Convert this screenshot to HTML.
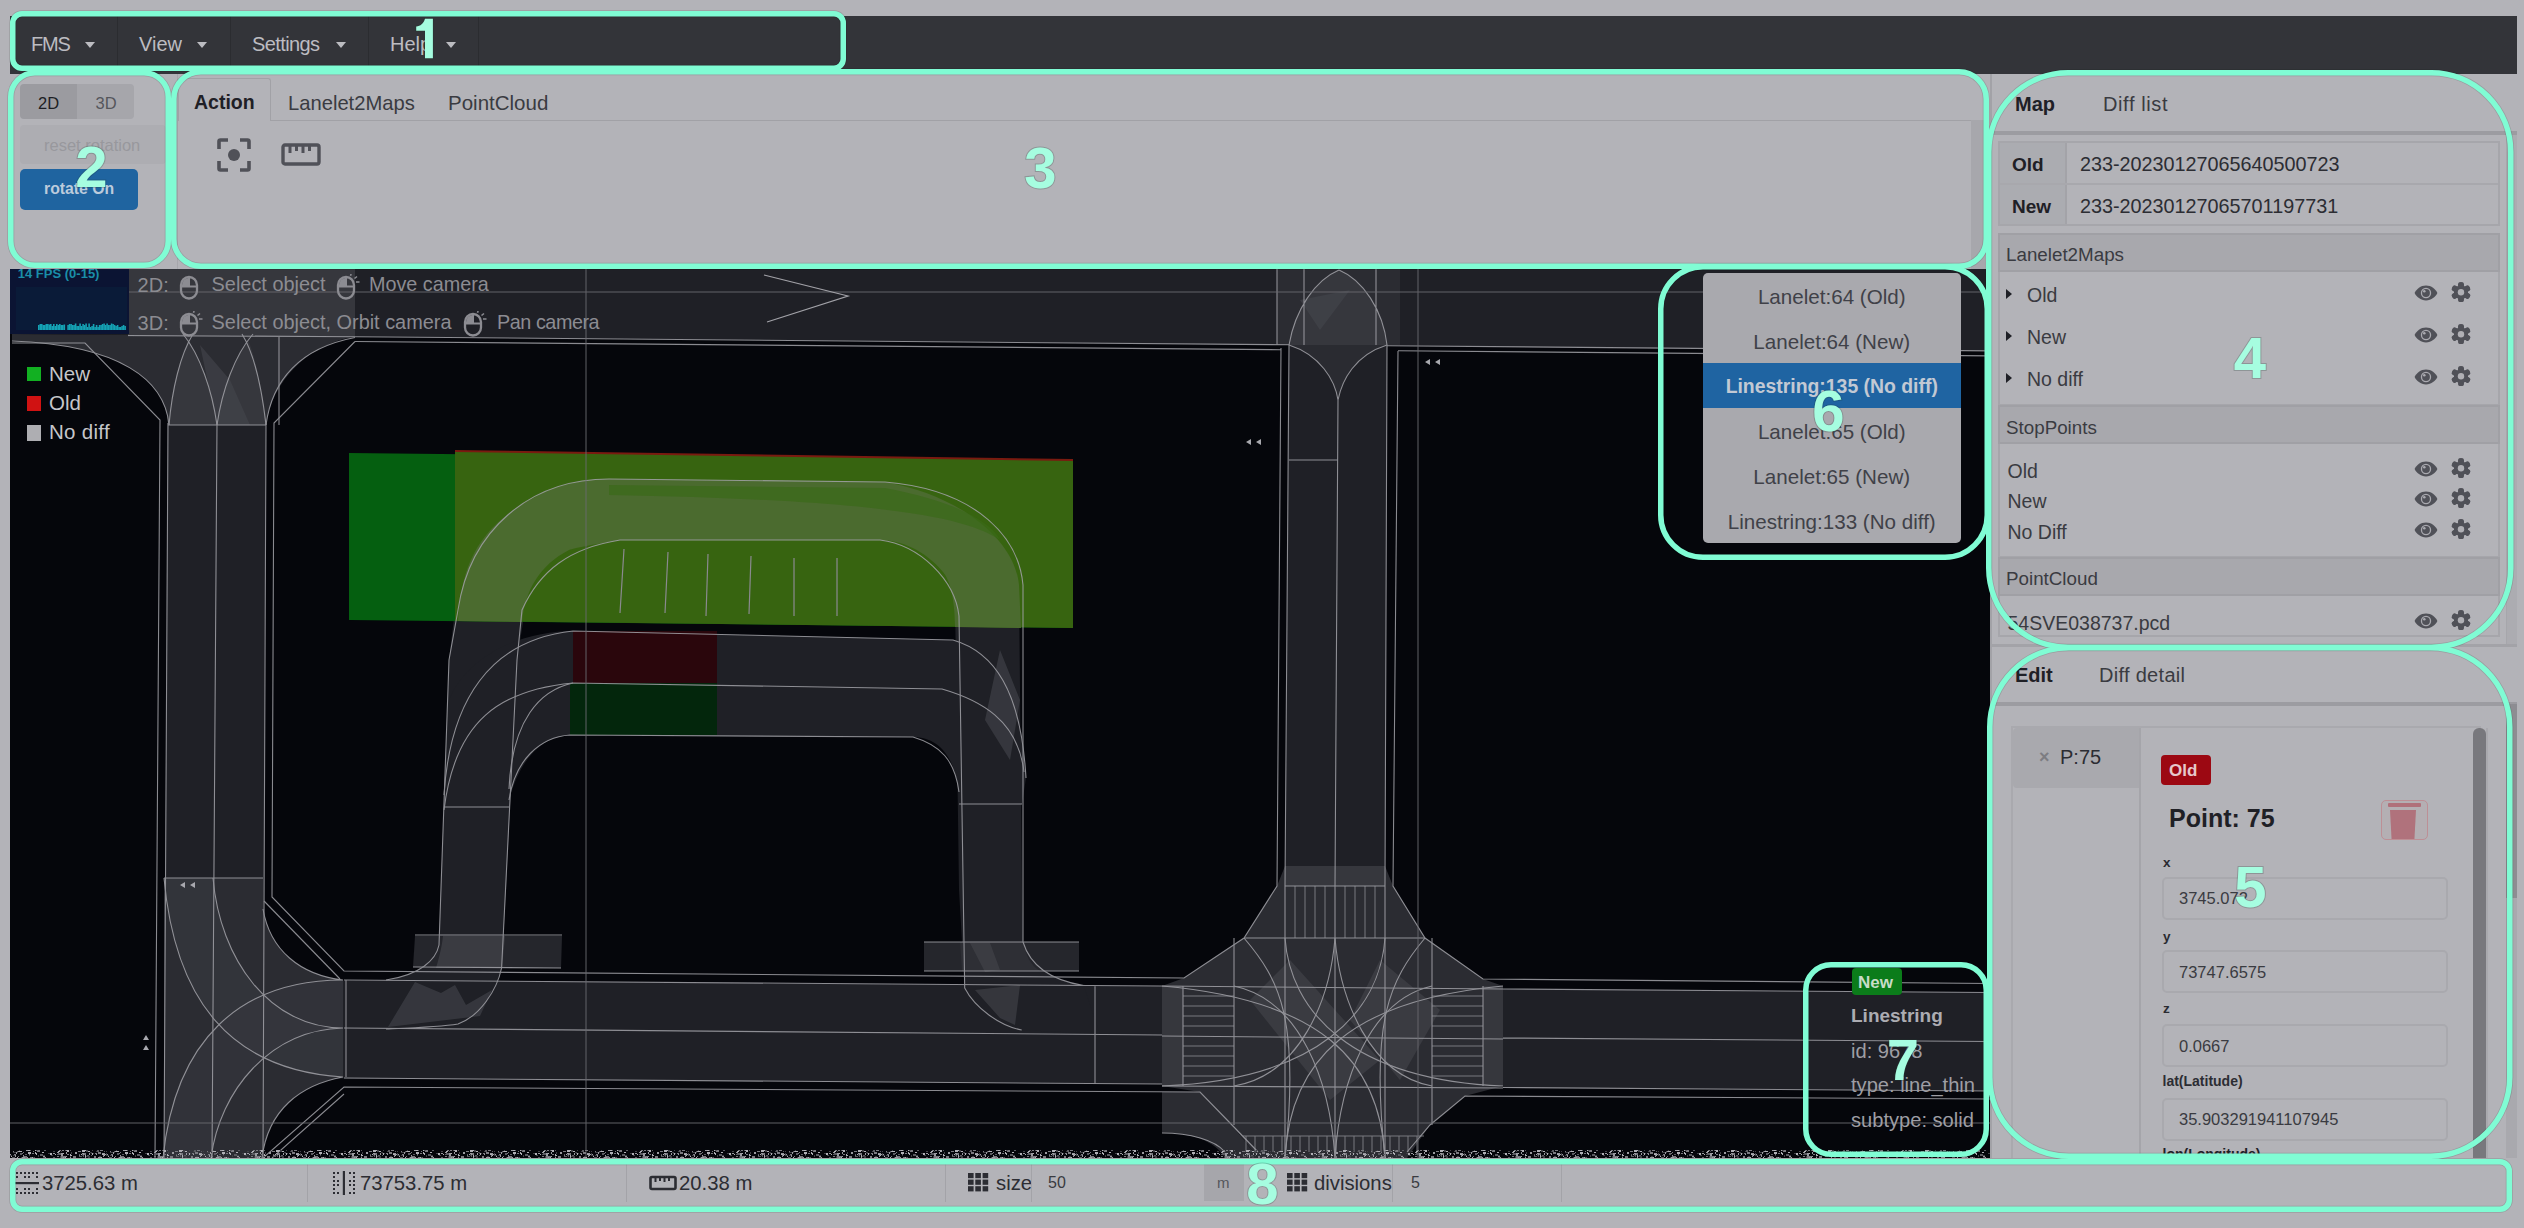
<!DOCTYPE html>
<html><head><meta charset="utf-8">
<style>
*{box-sizing:border-box;margin:0;padding:0}
html,body{width:2524px;height:1228px;overflow:hidden}
body{position:relative;background:#b3b3b8;font-family:"Liberation Sans",sans-serif;color:#2c2d33}
.a{position:absolute;white-space:nowrap}
.t{position:absolute;white-space:nowrap;line-height:1}
/* menubar */
#menubar{left:10px;top:16px;width:2507px;height:58px;background:#333439}
.msep{position:absolute;top:0;width:1px;height:58px;background:#2b2c30}
.mi{position:absolute;top:18px;font-size:20px;color:#bcbcc1}
.caret{position:absolute;top:26px;width:0;height:0;border-left:5px solid transparent;border-right:5px solid transparent;border-top:6px solid #bcbcc1}
/* panels */
#leftp{left:10px;top:74px;width:167px;height:195px;background:#b3b3b8}
#toolp{left:177px;top:74px;width:1813px;height:195px;background:#b3b3b8;border-left:1px solid #a6a6ab}
#rightp{left:1990px;top:74px;width:527px;height:1084px;background:#b3b3b8;border-left:2px solid #a2a2a7}
#status{left:10px;top:1158px;width:2507px;height:54px;background:#b3b3b8}
#map{left:10px;top:269px;width:1980px;height:889px;background:#05060b;overflow:hidden}
.inp{left:169.5px;width:286px;height:43px;border:2px solid #a9a9ae;border-radius:5px;background:#b3b3b8}
</style></head>
<body>
<!-- MENUBAR -->
<div id="menubar" class="a">
  <div class="msep" style="left:107px"></div>
  <div class="msep" style="left:220px"></div>
  <div class="msep" style="left:358px"></div>
  <div class="msep" style="left:468px"></div>
  <div class="mi t" style="left:21px;letter-spacing:-1.2px">FMS</div><div class="caret" style="left:75px"></div>
  <div class="mi t" style="left:129px">View</div><div class="caret" style="left:187px"></div>
  <div class="mi t" style="left:242px;letter-spacing:-0.6px">Settings</div><div class="caret" style="left:326px"></div>
  <div class="mi t" style="left:380px">Help</div><div class="caret" style="left:436px"></div>
</div>

<!-- LEFT PANEL -->
<div id="leftp" class="a">
  <div class="a" style="left:9.5px;top:10px;width:57.5px;height:34.6px;background:#9b9ba0;border-radius:4px 0 0 4px"></div>
  <div class="a" style="left:67px;top:10px;width:57px;height:34.6px;background:#a6a6ab;border-radius:0 4px 4px 0"></div>
  <div class="t" style="left:28px;top:21px;font-size:16.5px;color:#1e1f25">2D</div>
  <div class="t" style="left:85.5px;top:21px;font-size:16.5px;color:#55565c">3D</div>
  <div class="a" style="left:9.5px;top:51px;width:146.5px;height:39px;background:#adadb2;border-radius:4px"></div>
  <div class="t" style="left:34px;top:63px;font-size:16.5px;color:#98989d">reset rotation</div>
  <div class="a" style="left:9.5px;top:95px;width:118.5px;height:41px;background:#1f64a0;border-radius:5px"></div>
  <div class="t" style="left:34px;top:107px;font-size:15.8px;font-weight:700;color:#bccbdc">rotate On</div>
</div>
<!-- TOOL PANEL -->
<div id="toolp" class="a">
  <div class="a" style="left:0;top:46px;width:1793px;height:1px;background:#a1a1a6"></div>
  <div class="a" style="left:0px;top:4px;width:93px;height:43px;background:#b3b3b8;border:1px solid #a1a1a6;border-bottom:none;border-radius:3px 3px 0 0"></div>
  <div class="t" style="left:16px;top:19px;font-size:19.5px;font-weight:700;color:#1f2026">Action</div>
  <div class="t" style="left:110px;top:19px;font-size:20.2px;color:#3a3b41">Lanelet2Maps</div>
  <div class="t" style="left:270px;top:19px;font-size:20.5px;color:#3a3b41">PointCloud</div>
  <svg class="a" style="left:39px;top:64px" width="34" height="34" viewBox="0 0 34 34">
    <path d="M2 11V3.5A1.5 1.5 0 0 1 3.5 2H11M23 2h7.5A1.5 1.5 0 0 1 32 3.5V11M32 23v7.5a1.5 1.5 0 0 1-1.5 1.5H23M11 32H3.5A1.5 1.5 0 0 1 2 30.5V23" fill="none" stroke="#505158" stroke-width="3.6"/>
    <circle cx="17" cy="17" r="6" fill="#505158"/>
  </svg>
  <svg class="a" style="left:103px;top:69px" width="40" height="23" viewBox="0 0 40 23">
    <rect x="2" y="2" width="36" height="19" rx="2" fill="none" stroke="#505158" stroke-width="3.4"/>
    <path d="M9 2v8M15.5 2v6M22 2v8M28.5 2v6" stroke="#505158" stroke-width="3"/>
  </svg>
  <div class="a" style="left:1793px;top:46px;width:14px;height:149px;background:#a7a7ac"></div>
</div>
<!-- MAP -->
<div id="map" class="a">
<svg class="a" style="left:0;top:0" width="1980" height="889" viewBox="10 269 1980 889">
<defs>
  <pattern id="noise" width="97" height="9" patternUnits="userSpaceOnUse"><rect x="41" y="2" width="2" height="2" fill="#5a5a60"/><rect x="9" y="8" width="1" height="1" fill="#404046"/><rect x="7" y="8" width="1" height="1" fill="#5a5a60"/><rect x="55" y="6" width="1" height="1" fill="#5a5a60"/><rect x="70" y="6" width="1" height="2" fill="#5a5a60"/><rect x="28" y="0" width="3" height="2" fill="#b0b0b6"/><rect x="6" y="3" width="1" height="2" fill="#7a7a80"/><rect x="37" y="6" width="1" height="2" fill="#5a5a60"/><rect x="73" y="4" width="3" height="2" fill="#7a7a80"/><rect x="13" y="3" width="2" height="1" fill="#404046"/><rect x="91" y="1" width="3" height="1" fill="#404046"/><rect x="26" y="7" width="3" height="1" fill="#9a9aa0"/><rect x="59" y="7" width="2" height="1" fill="#7a7a80"/><rect x="23" y="3" width="1" height="2" fill="#9a9aa0"/><rect x="67" y="7" width="2" height="2" fill="#b0b0b6"/><rect x="36" y="1" width="1" height="2" fill="#b0b0b6"/><rect x="21" y="5" width="1" height="1" fill="#b0b0b6"/><rect x="5" y="1" width="3" height="2" fill="#9a9aa0"/><rect x="43" y="5" width="3" height="1" fill="#404046"/><rect x="58" y="1" width="1" height="1" fill="#b0b0b6"/><rect x="89" y="1" width="1" height="2" fill="#9a9aa0"/><rect x="82" y="7" width="2" height="2" fill="#b0b0b6"/><rect x="85" y="5" width="1" height="1" fill="#9a9aa0"/><rect x="21" y="1" width="2" height="1" fill="#7a7a80"/><rect x="36" y="2" width="1" height="1" fill="#b0b0b6"/><rect x="63" y="1" width="1" height="1" fill="#b0b0b6"/><rect x="70" y="4" width="1" height="1" fill="#404046"/><rect x="35" y="6" width="2" height="2" fill="#b0b0b6"/><rect x="29" y="2" width="1" height="1" fill="#7a7a80"/><rect x="29" y="3" width="1" height="1" fill="#404046"/><rect x="23" y="4" width="2" height="1" fill="#7a7a80"/><rect x="53" y="8" width="2" height="2" fill="#404046"/><rect x="40" y="2" width="3" height="2" fill="#5a5a60"/><rect x="58" y="8" width="2" height="1" fill="#b0b0b6"/><rect x="50" y="1" width="2" height="2" fill="#b0b0b6"/><rect x="7" y="3" width="1" height="1" fill="#b0b0b6"/><rect x="20" y="1" width="2" height="2" fill="#5a5a60"/><rect x="13" y="0" width="3" height="1" fill="#404046"/><rect x="12" y="5" width="3" height="1" fill="#5a5a60"/><rect x="26" y="6" width="1" height="2" fill="#9a9aa0"/><rect x="44" y="5" width="2" height="1" fill="#5a5a60"/><rect x="62" y="7" width="2" height="1" fill="#9a9aa0"/><rect x="10" y="2" width="1" height="2" fill="#9a9aa0"/><rect x="94" y="4" width="2" height="2" fill="#7a7a80"/><rect x="66" y="0" width="1" height="2" fill="#9a9aa0"/><rect x="18" y="8" width="1" height="2" fill="#9a9aa0"/><rect x="82" y="1" width="2" height="2" fill="#9a9aa0"/><rect x="21" y="5" width="1" height="2" fill="#404046"/><rect x="64" y="5" width="1" height="2" fill="#7a7a80"/><rect x="30" y="6" width="1" height="1" fill="#404046"/><rect x="63" y="5" width="1" height="1" fill="#9a9aa0"/><rect x="60" y="4" width="1" height="2" fill="#404046"/><rect x="44" y="7" width="2" height="1" fill="#5a5a60"/><rect x="28" y="1" width="1" height="1" fill="#7a7a80"/><rect x="43" y="3" width="2" height="2" fill="#404046"/><rect x="0" y="7" width="2" height="2" fill="#5a5a60"/><rect x="84" y="1" width="2" height="2" fill="#7a7a80"/><rect x="61" y="2" width="2" height="2" fill="#9a9aa0"/><rect x="11" y="6" width="2" height="1" fill="#5a5a60"/><rect x="92" y="2" width="1" height="1" fill="#5a5a60"/><rect x="19" y="7" width="1" height="2" fill="#404046"/><rect x="60" y="5" width="1" height="2" fill="#404046"/><rect x="16" y="0" width="1" height="2" fill="#5a5a60"/><rect x="67" y="2" width="2" height="1" fill="#7a7a80"/><rect x="3" y="4" width="1" height="1" fill="#404046"/><rect x="30" y="5" width="2" height="2" fill="#b0b0b6"/><rect x="16" y="0" width="2" height="1" fill="#404046"/><rect x="66" y="6" width="3" height="1" fill="#404046"/><rect x="19" y="8" width="3" height="1" fill="#b0b0b6"/><rect x="23" y="0" width="1" height="1" fill="#7a7a80"/><rect x="60" y="1" width="3" height="1" fill="#9a9aa0"/><rect x="87" y="8" width="3" height="2" fill="#b0b0b6"/><rect x="13" y="8" width="1" height="1" fill="#7a7a80"/><rect x="35" y="0" width="1" height="2" fill="#b0b0b6"/><rect x="71" y="0" width="1" height="1" fill="#9a9aa0"/><rect x="78" y="8" width="3" height="2" fill="#7a7a80"/><rect x="88" y="4" width="2" height="2" fill="#404046"/><rect x="61" y="8" width="1" height="2" fill="#404046"/><rect x="33" y="8" width="1" height="1" fill="#7a7a80"/><rect x="53" y="1" width="2" height="1" fill="#9a9aa0"/><rect x="9" y="3" width="2" height="1" fill="#7a7a80"/><rect x="85" y="4" width="1" height="1" fill="#9a9aa0"/><rect x="18" y="4" width="1" height="1" fill="#7a7a80"/><rect x="95" y="1" width="2" height="1" fill="#7a7a80"/><rect x="85" y="3" width="1" height="2" fill="#b0b0b6"/><rect x="65" y="6" width="2" height="1" fill="#7a7a80"/><rect x="45" y="5" width="1" height="2" fill="#9a9aa0"/><rect x="2" y="5" width="3" height="1" fill="#b0b0b6"/><rect x="90" y="0" width="2" height="1" fill="#404046"/><rect x="79" y="4" width="3" height="1" fill="#5a5a60"/><rect x="29" y="1" width="1" height="1" fill="#9a9aa0"/><rect x="5" y="2" width="2" height="1" fill="#b0b0b6"/><rect x="86" y="4" width="2" height="1" fill="#404046"/><rect x="65" y="7" width="2" height="1" fill="#9a9aa0"/><rect x="7" y="2" width="2" height="1" fill="#9a9aa0"/><rect x="2" y="1" width="2" height="1" fill="#404046"/><rect x="28" y="1" width="2" height="1" fill="#b0b0b6"/><rect x="1" y="5" width="3" height="1" fill="#9a9aa0"/><rect x="79" y="2" width="1" height="2" fill="#7a7a80"/><rect x="14" y="2" width="2" height="1" fill="#7a7a80"/><rect x="25" y="4" width="2" height="2" fill="#7a7a80"/><rect x="37" y="7" width="3" height="2" fill="#7a7a80"/><rect x="34" y="5" width="1" height="1" fill="#5a5a60"/><rect x="1" y="0" width="3" height="2" fill="#7a7a80"/><rect x="65" y="7" width="1" height="1" fill="#5a5a60"/><rect x="84" y="6" width="2" height="2" fill="#b0b0b6"/><rect x="64" y="4" width="1" height="1" fill="#9a9aa0"/><rect x="25" y="2" width="2" height="1" fill="#5a5a60"/><rect x="16" y="0" width="1" height="2" fill="#9a9aa0"/><rect x="55" y="2" width="1" height="1" fill="#b0b0b6"/><rect x="64" y="4" width="3" height="1" fill="#9a9aa0"/><rect x="5" y="7" width="1" height="1" fill="#9a9aa0"/><rect x="57" y="0" width="2" height="1" fill="#9a9aa0"/><rect x="70" y="5" width="1" height="1" fill="#9a9aa0"/><rect x="27" y="5" width="1" height="1" fill="#9a9aa0"/><rect x="48" y="1" width="2" height="1" fill="#404046"/><rect x="83" y="3" width="1" height="2" fill="#5a5a60"/><rect x="11" y="4" width="1" height="1" fill="#b0b0b6"/><rect x="75" y="0" width="2" height="1" fill="#9a9aa0"/><rect x="38" y="3" width="1" height="2" fill="#404046"/><rect x="96" y="2" width="3" height="1" fill="#9a9aa0"/><rect x="92" y="7" width="1" height="1" fill="#404046"/><rect x="82" y="2" width="1" height="2" fill="#404046"/><rect x="80" y="6" width="3" height="1" fill="#404046"/><rect x="96" y="8" width="3" height="1" fill="#404046"/><rect x="91" y="3" width="1" height="1" fill="#5a5a60"/><rect x="17" y="5" width="1" height="1" fill="#b0b0b6"/><rect x="71" y="0" width="1" height="2" fill="#404046"/><rect x="87" y="3" width="2" height="1" fill="#5a5a60"/><rect x="58" y="1" width="3" height="2" fill="#5a5a60"/><rect x="84" y="8" width="1" height="2" fill="#b0b0b6"/><rect x="32" y="1" width="2" height="1" fill="#7a7a80"/><rect x="29" y="7" width="2" height="1" fill="#5a5a60"/><rect x="61" y="4" width="1" height="2" fill="#7a7a80"/><rect x="9" y="2" width="2" height="1" fill="#9a9aa0"/><rect x="79" y="2" width="1" height="1" fill="#5a5a60"/><rect x="62" y="4" width="1" height="2" fill="#7a7a80"/><rect x="86" y="7" width="2" height="2" fill="#404046"/><rect x="36" y="7" width="2" height="1" fill="#5a5a60"/><rect x="70" y="3" width="2" height="1" fill="#b0b0b6"/><rect x="2" y="4" width="2" height="1" fill="#404046"/><rect x="57" y="4" width="2" height="1" fill="#7a7a80"/><rect x="9" y="1" width="1" height="2" fill="#404046"/><rect x="33" y="5" width="1" height="2" fill="#404046"/><rect x="35" y="1" width="2" height="1" fill="#b0b0b6"/><rect x="62" y="6" width="1" height="1" fill="#5a5a60"/><rect x="62" y="7" width="2" height="1" fill="#7a7a80"/><rect x="53" y="5" width="2" height="1" fill="#5a5a60"/><rect x="42" y="0" width="2" height="1" fill="#b0b0b6"/><rect x="15" y="3" width="1" height="2" fill="#9a9aa0"/><rect x="32" y="5" width="1" height="1" fill="#b0b0b6"/><rect x="75" y="1" width="2" height="1" fill="#9a9aa0"/><rect x="6" y="4" width="1" height="1" fill="#9a9aa0"/><rect x="81" y="2" width="1" height="1" fill="#b0b0b6"/><rect x="65" y="5" width="1" height="1" fill="#b0b0b6"/><rect x="3" y="6" width="3" height="2" fill="#7a7a80"/><rect x="92" y="1" width="1" height="2" fill="#b0b0b6"/><rect x="57" y="2" width="2" height="1" fill="#5a5a60"/><rect x="70" y="2" width="1" height="1" fill="#b0b0b6"/><rect x="43" y="4" width="2" height="1" fill="#9a9aa0"/><rect x="51" y="3" width="2" height="1" fill="#404046"/><rect x="85" y="6" width="1" height="1" fill="#7a7a80"/><rect x="9" y="3" width="3" height="1" fill="#404046"/><rect x="28" y="7" width="2" height="1" fill="#b0b0b6"/><rect x="17" y="8" width="1" height="1" fill="#5a5a60"/><rect x="22" y="5" width="3" height="1" fill="#9a9aa0"/><rect x="30" y="5" width="2" height="2" fill="#7a7a80"/><rect x="2" y="6" width="2" height="1" fill="#404046"/><rect x="26" y="6" width="2" height="1" fill="#5a5a60"/><rect x="63" y="4" width="3" height="1" fill="#7a7a80"/></pattern>
</defs>
<g fill="#1f2026">
  <polygon points="10,269 1990,269 1990,350.9 1387,345.7 1289,344.8 355,336.7 10,334"/>
  <polygon points="168,337 266,337 263,1158 164,1158"/>
  <polygon points="272,980 1162,986 1162,1084 272,1078"/>
  <polygon points="1289,345 1387,345 1385,886 1285,886"/>
  <polygon points="1503,989 1990,992.5 1990,1091 1503,1087.5"/>
  <!-- left lane of U -->
  <path d="M449,660 L455,610 L525,610 L517,660 L506,890 L501.6,968 C497,990 480,1016 458,1024 C440,1027 410,1028 386,1029 L386,980 C420,975 436,960 439,945 Z"/>
  <!-- right lane of U -->
  <path d="M955,600 L1019,585 L1022,890 L1023,942 C1030,965 1050,980 1083.6,985.5 L1100,1034 L1021.7,1030 C1000,1026 975,1008 964.7,988 L959,890 Z"/>
  <!-- lower band -->
  <path d="M449,700 C470,650 530,631 573,631 L953,640 C994,652 1021,690 1026,778 L1022,804 L959,804 C959,760 940,737 913,737 L570,735 C540,737 520,760 509,800 L444,810 Z"/>
</g>
<!-- lighter intersection fills -->
<g fill="#2b2c32">
  <path d="M12,334 L355,336.7 C310,343 272,380 266,425 L169,425 C165,380 120,345 12,341 Z"/><polygon points="128,269 355,269 355,337 128,337"/>
  <path d="M164,878 L263,878 L263,909 C270,950 300,975 343,980 L343,1077 C300,1085 268,1110 262,1158 L164,1158 Z"/>
  <polygon points="1285,866 1385,866 1393,886 1425,938 1483,979 1503,986 1503,1086 1465,1096 1430,1125 1407,1158 1258,1158 1232,1125 1200,1092 1162,1086 1162,986 1184,978 1244,938 1277,886"/><path d="M1162,1092 L1200,1092 L1232,1125 L1258,1158 L1225,1158 C1215,1140 1190,1133 1162,1133 Z"/>
  <polygon points="1277,269 1400,269 1400,345 1277,345"/>
</g>
<g fill="#36373d">
  <polygon points="128,269 355,269 355,337 128,337"/>
  <path d="M169,425 C172,390 180,355 190,337 L186,337 C200,355 212,390 217,425 Z"/>
  <path d="M217,425 C222,390 235,355 250,337 L247,337 C255,355 262,390 266,425 Z"/>
  <path d="M1289,345 C1295,310 1315,280 1339,270 C1363,280 1383,310 1387,345 Z"/>
  <path d="M164,878 L213,878 C220,960 270,1028 343,1028 L343,1077 C230,1070 175,1000 164,878 Z" opacity="0.7"/>
  <path d="M163,1158 C175,1040 240,980 343,980 L343,1028 C270,1030 220,1090 211,1158 Z" opacity="0.6"/>
  <polygon points="1162,986 1183,986 1183,1086 1162,1086"/>
  <polygon points="1483,986 1503,986 1503,1086 1483,1086"/>
  <polygon points="1285,866 1385,866 1385,886 1285,886"/>
  
  <path d="M1289,345 C1320,355 1335,380 1338,400 C1342,380 1355,355 1387,345 Z" fill="#2a2b31"/>
</g>
<polygon points="415,936 562,936 561,968 413,967" fill="#25262c"/><polygon points="924,942 1079,942 1079,971 924,971" fill="#25262c"/><path d="M443,936 L505,936 L502,968 L436,968 C440,955 442,945 443,936Z" fill="#3a3b41"/><path d="M960,942 L1023,942 C1026,955 1030,965 1040,971 L962,971Z" fill="#2e2f35"/>
<g fill="#45464c" opacity="0.6">
  <polygon points="200,345 230,380 250,425 217,425"/>
  <polygon points="1300,300 1350,290 1320,330"/>
  <polygon points="1290,960 1380,1060 1330,1100 1250,1000"/>
  <polygon points="1380,960 1440,1010 1400,1080 1350,1020"/>
  <polygon points="388,1027 415,982 441,993 455,985 466,1005 492,990 480,1016"/><polygon points="975,990 1020,985 1015,1025 1000,1018"/><polygon points="970,943 990,943 1000,970 985,972"/>
  <polygon points="1000,650 1020,700 1010,760 985,720"/>
</g>
<!-- green / red diff areas -->
<polygon points="349,453 1073,461 1073,628 349,620" fill="#055f10"/>
<polygon points="455,451 1073,460 1073,628 455,621" fill="#376410"/>
<path d="M458,621 C462,560 480,520 554,488 C575,482 590,479 609,479 L885,482 C960,495 1015,540 1019,585 L1021,628 L955,627 C955,600 950,580 943,572 C925,550 900,540 880,540 L620,540 C590,545 575,548 569,550 C540,565 525,590 522,622 Z" fill="#4b6b2f"/>
<path d="M609,485 L885,488 C950,500 990,520 1000,540 C970,520 900,500 609,495 Z" fill="#3a6a18" opacity="0.7"/>
<polygon points="573,631 717,631 717,683 573,683" fill="#2a060c"/>
<polygon points="570,683 717,683 717,735 570,735" fill="#03260c"/>
<line x1="455" y1="451" x2="1073" y2="460" stroke="#7a1a10" stroke-width="2"/>
<g stroke="#8a8a8f" stroke-width="1.2" fill="none">
  <path d="M620,613 L624,549 M665,613 L668,552 M706,616 L708,554 M749,614 L751,556 M794,616 L794,558 M837,616 L837,558"/>
</g>
<!-- lines -->
<g stroke="#a2a2a8" stroke-width="1.1" fill="none" opacity="0.85">
  <path d="M355,336.7 L1289,344.8 M1387,345.7 L1990,350.9"/>
  <path d="M355,341.5 L1281,349.7 M1398,350.8 L1990,355.9"/>
  <path d="M12,343 L85,343 L160,420 L155,1158"/>
  <path d="M355,341.5 L274,423 L272,897 L344,971 L1184,978 L1244,938 L1277,886 L1281,348"/>
  <path d="M264,901 L340,979"/>
  <path d="M1398,351 L1393,886 L1425,938 L1483,979 L1990,983.5"/>
  <path d="M263,1158 L344,1087 L1200,1092 L1232,1125 L1258,1152 M272,1158 L344,1094 M1162,1133 C1190,1133 1215,1140 1225,1152"/>
  <path d="M1990,1099 L1465,1096 L1430,1125 L1407,1152"/>
  <path d="M168,423 L164,1158 M217,423 L212,1158 M266,423 L263,1158"/>
  <path d="M168,425 L266,425 M164,878 L263,878"/>
  <!-- funnel arcs -->
  <path d="M169,425 C172,390 180,355 193,334 M217,425 C212,390 200,355 183,334 M217,425 C222,390 235,355 253,334 M266,425 C262,390 255,355 242,334"/>
  <path d="M266,425 C272,380 300,348 355,337.5 M169,425 C165,380 120,345 12,341"/>
  <path d="M279,337 L279,425 M128,335.5 L355,336.7"/>
  <!-- bottom-left corner arcs -->
  <path d="M164,878 C175,1000 230,1070 343,1077 M213,878 C220,960 270,1028 343,1028 M163,1158 C175,1040 240,980 343,980 M211,1158 C220,1090 270,1030 343,1028 M263,909 C270,950 300,975 343,980 M262,1158 C268,1110 300,1085 343,1077"/>
  <path d="M346,980 L346,1077"/>
  <path d="M344,980 L1162,986 M344,1028 L1162,1035 M344,1078 L1162,1084 M1095,986 L1095,1084"/>
  <!-- right vertical road -->
  <path d="M1289,345 L1285,886 M1338,400 L1335,886 M1387,345 L1385,886"/>
  <path d="M1289,460 L1338,460 M1289,345 C1320,355 1335,380 1338,400 C1342,380 1355,355 1387,345"/>
  <path d="M1289,345 C1295,310 1315,280 1339,270 C1363,280 1383,310 1387,345 M1277,269 V345 M1304,269 V345 M1376,269 V345"/>
  <path d="M1285,886 L1385,886 M1244,938 L1425,938 M1234,938 L1234,1125 M1432,938 L1432,1125 M1183,986 L1183,1086 M1483,986 L1483,1086"/>
  <path d="M1162,986 L1503,989 M1162,1036 L1503,1039 M1162,1086 L1503,1088 M1503,989 L1990,992.5 M1503,1038 L1990,1041.5 M1503,1087.5 L1990,1091"/>
  <path d="M1285,886 L1285,1158 M1335,886 L1335,1158 M1385,886 L1385,1158"/>
  <!-- intersection arcs -->
  <path d="M1234,986 C1300,1000 1330,1080 1335,1158 M1432,986 C1370,1000 1340,1080 1335,1158 M1234,1086 C1300,1075 1330,1000 1335,938 M1432,1086 C1370,1075 1340,1000 1335,938"/>
  <path d="M1285,938 C1290,1010 1350,1080 1503,1086 M1385,938 C1380,1010 1320,1080 1162,1086 M1285,1158 C1290,1060 1350,1000 1503,986 M1385,1158 C1380,1060 1320,1000 1162,986"/>
  <path d="M1244,938 C1280,980 1300,1020 1285,1158 M1425,938 C1390,980 1370,1020 1385,1158"/>
  <!-- U lines -->
  <path d="M439,945 L449,660 L458,610 C470,530 530,479 609,479 L885,482 C980,490 1019,540 1023,585 L1023,942 C1030,965 1050,980 1083.6,985.5"/>
  <path d="M501.6,968 L517,660 L522,610 C540,570 570,548 620,540 L880,540 C920,545 955,580 959,616 L964.7,988 C975,1008 1000,1026 1021.7,1030"/>
  <path d="M439,945 C436,960 420,975 386,980 M501.6,968 C497,990 480,1016 458,1024 C440,1027 410,1028 386,1029"/>
  <path d="M444,795 C450,700 490,640 573,631 L953,640 C994,652 1021,690 1026,778"/>
  <path d="M444,810 C455,720 500,690 573,683 L942,689 C980,700 1018,720 1024,772"/>
  <path d="M509,789 C512,720 540,690 573,683 M509,800 C515,760 540,737 570,735 L913,737 C940,745 955,760 959,792"/>
  <path d="M444,807 L509,807 M959,804 L1022,804"/>
  <path d="M415,935 L562,935 M413,967 L561,968 M924,942 L1079,942 M924,971 L1079,971"/>
</g>
<g stroke="#9a9aa0" stroke-width="1" opacity="0.7">
  <path d="M1295,886V938M1305,886V938M1315,886V938M1325,886V938M1345,886V938M1355,886V938M1365,886V938M1375,886V938"/>
  <path d="M1183,996H1234M1183,1006H1234M1183,1016H1234M1183,1026H1234M1183,1046H1234M1183,1056H1234M1183,1066H1234M1183,1076H1234"/>
  <path d="M1432,996H1483M1432,1006H1483M1432,1016H1483M1432,1026H1483M1432,1046H1483M1432,1056H1483M1432,1066H1483M1432,1076H1483"/>
  <path d="M1246,1136V1152M1255,1136V1152M1264,1136V1152M1273,1136V1152M1282,1136V1152M1291,1136V1152M1300,1136V1152M1309,1136V1152M1318,1136V1152M1327,1136V1152M1336,1136V1152M1345,1136V1152M1354,1136V1152M1363,1136V1152M1372,1136V1152M1381,1136V1152M1390,1136V1152M1399,1136V1152M1408,1136V1152M1417,1136V1152M1243,1136H1424"/>
</g>
<g stroke="#6a6b70" stroke-width="1" opacity="0.9">
  <path d="M586,269V1158M1418,269V1158M10,1123H1990M10,292H1990"/>
</g>
<g fill="#a8a8ae">
  <path d="M180,885 l5,-3 v6 z M190,885 l5,-3 v6 z M1246,442 l5,-3 v6z M1256,442 l5,-3 v6z M1425,362 l5,-3 v6z M1435,362 l5,-3 v6z M146,1035 l-3,5 h6z M146,1045 l-3,5 h6z"/>
</g>
<path d="M764,275 L848,296 L767,322" stroke="#a2a2a8" stroke-width="1.2" fill="none"/>
<rect x="10" y="1150" width="1980" height="8" fill="url(#noise)"/>
</svg>



<div class="a" style="left:0;top:0;width:1980px;height:889px"><div class="t" style="left:127.6px;top:6px;font-size:20px;color:#8c8c92">2D:</div><svg class="a" style="left:169px;top:5px" width="26" height="26" viewBox="0 0 26 26"><rect x="2" y="3" width="16" height="21.5" rx="8" fill="none" stroke="#8c8c92" stroke-width="2.3"/><path d="M2.5 12.5H17.5M10 3V12.5" stroke="#8c8c92" stroke-width="2" fill="none"/><path d="M10 4 A7 7 0 0 0 3 11 V12.5 H10 Z" fill="#8c8c92"/></svg><div class="t" style="left:201.6px;top:6px;font-size:19.9px;color:#8c8c92">Select object</div><svg class="a" style="left:325.7px;top:5px" width="26" height="26" viewBox="0 0 26 26"><rect x="2" y="3" width="16" height="21.5" rx="8" fill="none" stroke="#8c8c92" stroke-width="2.3"/><path d="M2.5 12.5H17.5M10 3V12.5" stroke="#8c8c92" stroke-width="2" fill="none"/><path d="M10 4 A7 7 0 0 0 3 11 V12.5 H10 Z" fill="#8c8c92"/><path d="M18.5 4.5l2.5-2M20 8h3.5M14.5 1.8l.6-1.8" stroke="#8c8c92" stroke-width="1.6"/></svg><div class="t" style="left:359px;top:6px;font-size:19.8px;color:#8c8c92">Move camera</div><div class="t" style="left:127.6px;top:43.6px;font-size:20px;color:#8c8c92">3D:</div><svg class="a" style="left:169px;top:42px" width="26" height="26" viewBox="0 0 26 26"><rect x="2" y="3" width="16" height="21.5" rx="8" fill="none" stroke="#8c8c92" stroke-width="2.3"/><path d="M2.5 12.5H17.5M10 3V12.5" stroke="#8c8c92" stroke-width="2" fill="none"/><path d="M10 4 A7 7 0 0 0 3 11 V12.5 H10 Z" fill="#8c8c92"/><path d="M18.5 4.5l2.5-2M20 8h3.5M14.5 1.8l.6-1.8" stroke="#8c8c92" stroke-width="1.6"/></svg><div class="t" style="left:201.6px;top:43.6px;font-size:19.9px;color:#8c8c92">Select object, Orbit camera</div><svg class="a" style="left:453px;top:42px" width="26" height="26" viewBox="0 0 26 26"><rect x="2" y="3" width="16" height="21.5" rx="8" fill="none" stroke="#8c8c92" stroke-width="2.3"/><path d="M2.5 12.5H17.5M10 3V12.5" stroke="#8c8c92" stroke-width="2" fill="none"/><path d="M10 4 A7 7 0 0 0 3 11 V12.5 H10 Z" fill="#8c8c92"/><path d="M18.5 4.5l2.5-2M20 8h3.5M14.5 1.8l.6-1.8" stroke="#8c8c92" stroke-width="1.6"/></svg><div class="t" style="left:487px;top:43.6px;font-size:19.8px;color:#8c8c92;letter-spacing:-0.45px">Pan camera</div><div class="a" style="left:17px;top:98px;width:14px;height:14px;background:#12b022"></div><div class="a" style="left:17px;top:127px;width:14px;height:15px;background:#d01212"></div><div class="a" style="left:17px;top:156px;width:14px;height:16px;background:#aeaeb2"></div><div class="t" style="left:39px;top:95px;font-size:20.5px;color:#c6c6ca">New</div><div class="t" style="left:39px;top:124px;font-size:20.5px;color:#c6c6ca">Old</div><div class="t" style="left:39px;top:153px;font-size:20.5px;color:#c6c6ca;letter-spacing:0.3px">No diff</div><div class="a" style="left:1842px;top:699px;width:50px;height:27px;background:#0b7c1a;border-radius:4px"></div><div class="t" style="left:1848px;top:705px;font-size:17px;font-weight:700;color:#c8dcc8">New</div><div class="t" style="left:1841px;top:737px;font-size:19px;font-weight:700;color:#acacb2">Linestring</div><div class="t" style="left:1841px;top:772px;font-size:20.1px;color:#9e9ea4">id: 9678</div><div class="t" style="left:1841px;top:806px;font-size:20.1px;color:#9e9ea4">type: line_thin</div><div class="t" style="left:1841px;top:841px;font-size:20.1px;color:#9e9ea4">subtype: solid</div></div><div class="a" style="left:1692.5px;top:4px;width:258.5px;height:270px;background:#a9a9ae;border-radius:5px;overflow:hidden"><div class="t" style="left:0;top:14px;width:258.5px;text-align:center;font-size:20.6px;color:#404148">Lanelet:64 (Old)</div><div class="t" style="left:0;top:59px;width:258.5px;text-align:center;font-size:20.6px;color:#404148">Lanelet:64 (New)</div><div class="a" style="left:0;top:89.5px;width:258.5px;height:45px;background:#1f64a2"></div><div class="t" style="left:0;top:104px;width:258.5px;text-align:center;font-size:19.4px;font-weight:700;color:#c2c9d4">Linestring:135 (No diff)</div><div class="t" style="left:0;top:149px;width:258.5px;text-align:center;font-size:20.6px;color:#404148">Lanelet:65 (Old)</div><div class="t" style="left:0;top:194px;width:258.5px;text-align:center;font-size:20.6px;color:#404148">Lanelet:65 (New)</div><div class="t" style="left:0;top:239px;width:258.5px;text-align:center;font-size:20.6px;color:#404148">Linestring:133 (No diff)</div></div>
<!-- FPS panel -->
<div class="a" style="left:0;top:0;width:118.5px;height:65px;background:#0b1433"></div>
<div class="a" style="left:5.8px;top:17.5px;width:110.8px;height:43.5px;background:#0a1b38"></div>
<svg class="a" style="left:0;top:0" width="120" height="66"><g fill="#14a2b4"><rect x="28.0" y="56.0" width="1.6" height="5" /><rect x="29.5" y="55.0" width="1.6" height="6" /><rect x="31.0" y="55.0" width="1.6" height="6" /><rect x="32.5" y="56.0" width="1.6" height="5" /><rect x="34.0" y="56.0" width="1.6" height="5" /><rect x="35.5" y="55.0" width="1.6" height="6" /><rect x="37.0" y="55.0" width="1.6" height="6" /><rect x="38.5" y="55.5" width="1.6" height="5.5" /><rect x="40.0" y="55.0" width="1.6" height="6" /><rect x="41.5" y="57.0" width="1.6" height="4" /><rect x="43.0" y="55.0" width="1.6" height="6" /><rect x="44.5" y="57.0" width="1.6" height="4" /><rect x="46.0" y="55.0" width="1.6" height="6" /><rect x="47.5" y="56.0" width="1.6" height="5" /><rect x="49.0" y="55.0" width="1.6" height="6" /><rect x="50.5" y="56.0" width="1.6" height="5" /><rect x="52.0" y="56.0" width="1.6" height="5" /><rect x="53.5" y="55.5" width="1.6" height="5.5" /><rect x="57.3" y="56.0" width="1.6" height="5" /><rect x="58.8" y="55.0" width="1.6" height="6" /><rect x="60.3" y="55.0" width="1.6" height="6" /><rect x="61.8" y="56.0" width="1.6" height="5" /><rect x="63.3" y="56.0" width="1.6" height="5" /><rect x="64.8" y="54.5" width="1.6" height="6.5" /><rect x="66.3" y="57.0" width="1.6" height="4" /><rect x="67.8" y="57.0" width="1.6" height="4" /><rect x="69.3" y="54.5" width="1.6" height="6.5" /><rect x="70.8" y="57.0" width="1.6" height="4" /><rect x="72.3" y="55.0" width="1.6" height="6" /><rect x="73.8" y="56.0" width="1.6" height="5" /><rect x="75.3" y="54.5" width="1.6" height="6.5" /><rect x="76.8" y="58.0" width="1.6" height="3" /><rect x="78.3" y="54.5" width="1.6" height="6.5" /><rect x="79.8" y="58.0" width="1.6" height="3" /><rect x="81.3" y="57.0" width="1.6" height="4" /><rect x="82.8" y="55.0" width="1.6" height="6" /><rect x="84.3" y="58.0" width="1.6" height="3" /><rect x="85.8" y="56.0" width="1.6" height="5" /><rect x="87.3" y="58.0" width="1.6" height="3" /><rect x="88.8" y="56.0" width="1.6" height="5" /><rect x="90.3" y="56.0" width="1.6" height="5" /><rect x="91.8" y="55.0" width="1.6" height="6" /><rect x="93.3" y="54.5" width="1.6" height="6.5" /><rect x="94.8" y="56.0" width="1.6" height="5" /><rect x="96.3" y="54.5" width="1.6" height="6.5" /><rect x="97.8" y="56.0" width="1.6" height="5" /><rect x="99.3" y="56.0" width="1.6" height="5" /><rect x="100.8" y="54.5" width="1.6" height="6.5" /><rect x="102.3" y="55.0" width="1.6" height="6" /><rect x="103.8" y="56.0" width="1.6" height="5" /><rect x="105.3" y="57.0" width="1.6" height="4" /><rect x="106.8" y="56.0" width="1.6" height="5" /><rect x="108.3" y="58.0" width="1.6" height="3" /><rect x="109.8" y="58.0" width="1.6" height="3" /><rect x="111.3" y="57.0" width="1.6" height="4" /><rect x="112.8" y="56.0" width="1.6" height="5" /><rect x="114.3" y="57.0" width="1.6" height="4" /></g></svg>
<div class="t" style="left:7.8px;top:-2.4px;font-size:13px;font-weight:700;color:#1a8ea8">14 FPS (0-15)</div>
</div>

<!-- RIGHT PANEL -->
<div id="rightp" class="a">
  <div class="t" style="left:23px;top:20px;font-size:20px;font-weight:700;color:#1f2026">Map</div>
  <div class="t" style="left:111px;top:20px;font-size:20px;color:#3a3b41;letter-spacing:0.6px">Diff list</div>
  <div class="a" style="left:0;top:57px;width:525px;height:4px;background:#9c9ca1"></div>
  <!-- table -->
  <div class="a" style="left:6px;top:67px;width:502px;height:85px;border:2px solid #a6a6ab;background:#b3b3b8"></div>
  <div class="a" style="left:8px;top:69px;width:66px;height:81px;background:#abacb1"></div>
  <div class="a" style="left:73px;top:69px;width:2px;height:81px;background:#a3a3a8"></div>
  <div class="a" style="left:8px;top:109px;width:498px;height:2px;background:#a8a8ad"></div>
  <div class="t" style="left:20px;top:81px;font-size:19px;font-weight:700;color:#1f2026">Old</div>
  <div class="t" style="left:20px;top:123px;font-size:19px;font-weight:700;color:#1f2026">New</div>
  <div class="t" style="left:88px;top:81px;font-size:19.8px;color:#2c2d33">233-20230127065640500723</div>
  <div class="t" style="left:88px;top:123px;font-size:19.8px;color:#2c2d33">233-20230127065701197731</div>
  <!-- Lanelet2Maps -->
  <div class="a" style="left:6px;top:159px;width:502px;height:173px;border:2px solid #a6a6ab"></div>
  <div class="a" style="left:6px;top:159px;width:502px;height:39px;background:#a8a8ad;border:2px solid #a0a0a5"></div>
  <div class="t" style="left:14px;top:172px;font-size:18.8px;color:#3a3b41">Lanelet2Maps</div>
  <!-- StopPoints -->
  <div class="a" style="left:6px;top:331px;width:502px;height:153px;border:2px solid #a6a6ab"></div>
  <div class="a" style="left:6px;top:331px;width:502px;height:39px;background:#a8a8ad;border:2px solid #a0a0a5"></div>
  <div class="t" style="left:14px;top:345px;font-size:18.8px;color:#3a3b41">StopPoints</div>
  <!-- PointCloud -->
  <div class="a" style="left:6px;top:483px;width:502px;height:80px;border:2px solid #a6a6ab"></div>
  <div class="a" style="left:6px;top:483px;width:502px;height:39px;background:#a8a8ad;border:2px solid #a0a0a5"></div>
  <div class="t" style="left:14px;top:496px;font-size:18.8px;color:#3a3b41">PointCloud</div>
  <div class="a" style="left:514px;top:61px;width:11px;height:511px;background:#acacb1;border-left:1px solid #a6a6ab"></div>
  <div class="a" style="left:0;top:570px;width:525px;height:2.5px;background:#a3a3a8"></div>
  <!-- rows -->
<div class="a" style="left:14px;top:214.5px;width:0;height:0;border-top:5.5px solid transparent;border-bottom:5.5px solid transparent;border-left:6.2px solid #1f2026"></div><div class="t" style="left:35px;top:211.5px;font-size:19.5px;color:#3a3b41">Old</div><svg class="a" style="left:422px;top:210.9px" width="24" height="16" viewBox="0 0 24 16"><path d="M12 0.6C6.6 0.6 2.4 4.2 0.6 8c1.8 3.8 6 7.4 11.4 7.4s9.6-3.6 11.4-7.4C21.6 4.2 17.4 0.6 12 0.6z" fill="#505158"/><circle cx="12" cy="8" r="5.2" fill="#aaaab0"/><circle cx="12" cy="8" r="3.9" fill="#505158"/><circle cx="10.3" cy="6.2" r="1.3" fill="#aaaab0"/></svg><svg class="a" style="left:459px;top:208.3px" width="20" height="21" viewBox="0 0 20 21"><g fill="#505158"><rect x="7.2" y="0.3" width="5.6" height="19.8" rx="2" transform="rotate(0 10 10.2)"/><rect x="7.2" y="0.3" width="5.6" height="19.8" rx="2" transform="rotate(60 10 10.2)"/><rect x="7.2" y="0.3" width="5.6" height="19.8" rx="2" transform="rotate(120 10 10.2)"/><rect x="7.2" y="0.3" width="5.6" height="19.8" rx="2" transform="rotate(180 10 10.2)"/><rect x="7.2" y="0.3" width="5.6" height="19.8" rx="2" transform="rotate(240 10 10.2)"/><rect x="7.2" y="0.3" width="5.6" height="19.8" rx="2" transform="rotate(300 10 10.2)"/><circle cx="10" cy="10.2" r="7"/></g><circle cx="10" cy="10.2" r="3.2" fill="#b0b0b5"/></svg><div class="a" style="left:14px;top:256.5px;width:0;height:0;border-top:5.5px solid transparent;border-bottom:5.5px solid transparent;border-left:6.2px solid #1f2026"></div><div class="t" style="left:35px;top:253.5px;font-size:19.5px;color:#3a3b41">New</div><svg class="a" style="left:422px;top:252.9px" width="24" height="16" viewBox="0 0 24 16"><path d="M12 0.6C6.6 0.6 2.4 4.2 0.6 8c1.8 3.8 6 7.4 11.4 7.4s9.6-3.6 11.4-7.4C21.6 4.2 17.4 0.6 12 0.6z" fill="#505158"/><circle cx="12" cy="8" r="5.2" fill="#aaaab0"/><circle cx="12" cy="8" r="3.9" fill="#505158"/><circle cx="10.3" cy="6.2" r="1.3" fill="#aaaab0"/></svg><svg class="a" style="left:459px;top:250.3px" width="20" height="21" viewBox="0 0 20 21"><g fill="#505158"><rect x="7.2" y="0.3" width="5.6" height="19.8" rx="2" transform="rotate(0 10 10.2)"/><rect x="7.2" y="0.3" width="5.6" height="19.8" rx="2" transform="rotate(60 10 10.2)"/><rect x="7.2" y="0.3" width="5.6" height="19.8" rx="2" transform="rotate(120 10 10.2)"/><rect x="7.2" y="0.3" width="5.6" height="19.8" rx="2" transform="rotate(180 10 10.2)"/><rect x="7.2" y="0.3" width="5.6" height="19.8" rx="2" transform="rotate(240 10 10.2)"/><rect x="7.2" y="0.3" width="5.6" height="19.8" rx="2" transform="rotate(300 10 10.2)"/><circle cx="10" cy="10.2" r="7"/></g><circle cx="10" cy="10.2" r="3.2" fill="#b0b0b5"/></svg><div class="a" style="left:14px;top:298.5px;width:0;height:0;border-top:5.5px solid transparent;border-bottom:5.5px solid transparent;border-left:6.2px solid #1f2026"></div><div class="t" style="left:35px;top:295.5px;font-size:19.5px;color:#3a3b41">No diff</div><svg class="a" style="left:422px;top:294.9px" width="24" height="16" viewBox="0 0 24 16"><path d="M12 0.6C6.6 0.6 2.4 4.2 0.6 8c1.8 3.8 6 7.4 11.4 7.4s9.6-3.6 11.4-7.4C21.6 4.2 17.4 0.6 12 0.6z" fill="#505158"/><circle cx="12" cy="8" r="5.2" fill="#aaaab0"/><circle cx="12" cy="8" r="3.9" fill="#505158"/><circle cx="10.3" cy="6.2" r="1.3" fill="#aaaab0"/></svg><svg class="a" style="left:459px;top:292.3px" width="20" height="21" viewBox="0 0 20 21"><g fill="#505158"><rect x="7.2" y="0.3" width="5.6" height="19.8" rx="2" transform="rotate(0 10 10.2)"/><rect x="7.2" y="0.3" width="5.6" height="19.8" rx="2" transform="rotate(60 10 10.2)"/><rect x="7.2" y="0.3" width="5.6" height="19.8" rx="2" transform="rotate(120 10 10.2)"/><rect x="7.2" y="0.3" width="5.6" height="19.8" rx="2" transform="rotate(180 10 10.2)"/><rect x="7.2" y="0.3" width="5.6" height="19.8" rx="2" transform="rotate(240 10 10.2)"/><rect x="7.2" y="0.3" width="5.6" height="19.8" rx="2" transform="rotate(300 10 10.2)"/><circle cx="10" cy="10.2" r="7"/></g><circle cx="10" cy="10.2" r="3.2" fill="#b0b0b5"/></svg><div class="t" style="left:15.5px;top:387.5px;font-size:19.5px;color:#3a3b41">Old</div><svg class="a" style="left:422px;top:386.9px" width="24" height="16" viewBox="0 0 24 16"><path d="M12 0.6C6.6 0.6 2.4 4.2 0.6 8c1.8 3.8 6 7.4 11.4 7.4s9.6-3.6 11.4-7.4C21.6 4.2 17.4 0.6 12 0.6z" fill="#505158"/><circle cx="12" cy="8" r="5.2" fill="#aaaab0"/><circle cx="12" cy="8" r="3.9" fill="#505158"/><circle cx="10.3" cy="6.2" r="1.3" fill="#aaaab0"/></svg><svg class="a" style="left:459px;top:384.3px" width="20" height="21" viewBox="0 0 20 21"><g fill="#505158"><rect x="7.2" y="0.3" width="5.6" height="19.8" rx="2" transform="rotate(0 10 10.2)"/><rect x="7.2" y="0.3" width="5.6" height="19.8" rx="2" transform="rotate(60 10 10.2)"/><rect x="7.2" y="0.3" width="5.6" height="19.8" rx="2" transform="rotate(120 10 10.2)"/><rect x="7.2" y="0.3" width="5.6" height="19.8" rx="2" transform="rotate(180 10 10.2)"/><rect x="7.2" y="0.3" width="5.6" height="19.8" rx="2" transform="rotate(240 10 10.2)"/><rect x="7.2" y="0.3" width="5.6" height="19.8" rx="2" transform="rotate(300 10 10.2)"/><circle cx="10" cy="10.2" r="7"/></g><circle cx="10" cy="10.2" r="3.2" fill="#b0b0b5"/></svg><div class="t" style="left:15.5px;top:417.5px;font-size:19.5px;color:#3a3b41">New</div><svg class="a" style="left:422px;top:416.9px" width="24" height="16" viewBox="0 0 24 16"><path d="M12 0.6C6.6 0.6 2.4 4.2 0.6 8c1.8 3.8 6 7.4 11.4 7.4s9.6-3.6 11.4-7.4C21.6 4.2 17.4 0.6 12 0.6z" fill="#505158"/><circle cx="12" cy="8" r="5.2" fill="#aaaab0"/><circle cx="12" cy="8" r="3.9" fill="#505158"/><circle cx="10.3" cy="6.2" r="1.3" fill="#aaaab0"/></svg><svg class="a" style="left:459px;top:414.3px" width="20" height="21" viewBox="0 0 20 21"><g fill="#505158"><rect x="7.2" y="0.3" width="5.6" height="19.8" rx="2" transform="rotate(0 10 10.2)"/><rect x="7.2" y="0.3" width="5.6" height="19.8" rx="2" transform="rotate(60 10 10.2)"/><rect x="7.2" y="0.3" width="5.6" height="19.8" rx="2" transform="rotate(120 10 10.2)"/><rect x="7.2" y="0.3" width="5.6" height="19.8" rx="2" transform="rotate(180 10 10.2)"/><rect x="7.2" y="0.3" width="5.6" height="19.8" rx="2" transform="rotate(240 10 10.2)"/><rect x="7.2" y="0.3" width="5.6" height="19.8" rx="2" transform="rotate(300 10 10.2)"/><circle cx="10" cy="10.2" r="7"/></g><circle cx="10" cy="10.2" r="3.2" fill="#b0b0b5"/></svg><div class="t" style="left:15.5px;top:448.5px;font-size:19.5px;color:#3a3b41">No Diff</div><svg class="a" style="left:422px;top:447.9px" width="24" height="16" viewBox="0 0 24 16"><path d="M12 0.6C6.6 0.6 2.4 4.2 0.6 8c1.8 3.8 6 7.4 11.4 7.4s9.6-3.6 11.4-7.4C21.6 4.2 17.4 0.6 12 0.6z" fill="#505158"/><circle cx="12" cy="8" r="5.2" fill="#aaaab0"/><circle cx="12" cy="8" r="3.9" fill="#505158"/><circle cx="10.3" cy="6.2" r="1.3" fill="#aaaab0"/></svg><svg class="a" style="left:459px;top:445.3px" width="20" height="21" viewBox="0 0 20 21"><g fill="#505158"><rect x="7.2" y="0.3" width="5.6" height="19.8" rx="2" transform="rotate(0 10 10.2)"/><rect x="7.2" y="0.3" width="5.6" height="19.8" rx="2" transform="rotate(60 10 10.2)"/><rect x="7.2" y="0.3" width="5.6" height="19.8" rx="2" transform="rotate(120 10 10.2)"/><rect x="7.2" y="0.3" width="5.6" height="19.8" rx="2" transform="rotate(180 10 10.2)"/><rect x="7.2" y="0.3" width="5.6" height="19.8" rx="2" transform="rotate(240 10 10.2)"/><rect x="7.2" y="0.3" width="5.6" height="19.8" rx="2" transform="rotate(300 10 10.2)"/><circle cx="10" cy="10.2" r="7"/></g><circle cx="10" cy="10.2" r="3.2" fill="#b0b0b5"/></svg><div class="t" style="left:15.5px;top:539.5px;font-size:19.5px;color:#3a3b41">54SVE038737.pcd</div><svg class="a" style="left:422px;top:538.9px" width="24" height="16" viewBox="0 0 24 16"><path d="M12 0.6C6.6 0.6 2.4 4.2 0.6 8c1.8 3.8 6 7.4 11.4 7.4s9.6-3.6 11.4-7.4C21.6 4.2 17.4 0.6 12 0.6z" fill="#505158"/><circle cx="12" cy="8" r="5.2" fill="#aaaab0"/><circle cx="12" cy="8" r="3.9" fill="#505158"/><circle cx="10.3" cy="6.2" r="1.3" fill="#aaaab0"/></svg><svg class="a" style="left:459px;top:536.3px" width="20" height="21" viewBox="0 0 20 21"><g fill="#505158"><rect x="7.2" y="0.3" width="5.6" height="19.8" rx="2" transform="rotate(0 10 10.2)"/><rect x="7.2" y="0.3" width="5.6" height="19.8" rx="2" transform="rotate(60 10 10.2)"/><rect x="7.2" y="0.3" width="5.6" height="19.8" rx="2" transform="rotate(120 10 10.2)"/><rect x="7.2" y="0.3" width="5.6" height="19.8" rx="2" transform="rotate(180 10 10.2)"/><rect x="7.2" y="0.3" width="5.6" height="19.8" rx="2" transform="rotate(240 10 10.2)"/><rect x="7.2" y="0.3" width="5.6" height="19.8" rx="2" transform="rotate(300 10 10.2)"/><circle cx="10" cy="10.2" r="7"/></g><circle cx="10" cy="10.2" r="3.2" fill="#b0b0b5"/></svg>
  <!-- Edit panel -->
  <div class="t" style="left:23px;top:591px;font-size:20px;font-weight:700;color:#1f2026">Edit</div>
  <div class="t" style="left:107px;top:591px;font-size:20px;color:#3a3b41;letter-spacing:0.3px">Diff detail</div>
  <div class="a" style="left:0;top:628px;width:525px;height:4px;background:#9c9ca1"></div>
  <div class="a" style="left:19px;top:652px;width:470px;height:432px;border:2px solid #a9a9ae;border-bottom:none"></div>
  <div class="a" style="left:21px;top:654px;width:128px;height:60px;background:#a9a9ae;border-radius:4px 0 0 4px"></div>
  <div class="a" style="left:147px;top:654px;width:2px;height:430px;background:#a5a5aa"></div>
  <div class="t" style="left:47px;top:674px;font-size:18px;font-weight:700;color:#7d7d82">&#215;</div>
  <div class="t" style="left:68px;top:673px;font-size:20px;color:#2c2d33">P:75</div>
  <div class="a" style="left:169px;top:681px;width:50px;height:30px;background:#9c0812;border-radius:4px"></div>
  <div class="t" style="left:177px;top:688px;font-size:17px;font-weight:700;color:#e6c8ca">Old</div>
  <div class="t" style="left:177px;top:732px;font-size:25px;font-weight:700;color:#1f2026">Point: 75</div>
  <div class="a" style="left:389px;top:726px;width:46.6px;height:39.5px;border:1.5px solid #bd8f95;border-radius:5px;background:#b4afb3"></div><div class="a" style="left:396px;top:729px;width:32.7px;height:3.8px;background:#b0707a;border-radius:1px"></div><div class="a" style="left:398px;top:736px;width:26px;height:29px;background:#b0727c;clip-path:polygon(0 0,100% 0,94% 100%,6% 100%)"></div>
  <div class="t" style="left:171px;top:781.5px;font-size:13.5px;font-weight:700;color:#2a2b31">x</div>
  <div class="a inp" style="top:803px"></div><div class="t" style="left:187px;top:816px;font-size:16.5px;color:#3a3b41">3745.072</div>
  <div class="t" style="left:171px;top:855.5px;font-size:13.5px;font-weight:700;color:#2a2b31">y</div>
  <div class="a inp" style="top:876px"></div><div class="t" style="left:187px;top:890px;font-size:16.5px;color:#3a3b41">73747.6575</div>
  <div class="t" style="left:171px;top:927.5px;font-size:13.5px;font-weight:700;color:#2a2b31">z</div>
  <div class="a inp" style="top:950px"></div><div class="t" style="left:187px;top:964px;font-size:16.5px;color:#3a3b41">0.0667</div>
  <div class="t" style="left:170.5px;top:1000px;font-size:14px;font-weight:700;color:#2c2d33">lat(Latitude)</div>
  <div class="a inp" style="top:1024px"></div><div class="t" style="left:187px;top:1037px;font-size:16.5px;color:#3a3b41">35.903291941107945</div>
  <div class="t" style="left:170.5px;top:1073px;font-size:14px;font-weight:700;color:#1f2026">lon(Longitude)</div>
  <div class="a" style="left:481px;top:654px;width:13px;height:430px;background:#78787d;border-radius:6px 6px 0 0"></div>
  <div class="a" style="left:514px;top:630px;width:11px;height:454px;background:#a9a9ae"></div><div class="a" style="left:514px;top:630px;width:11px;height:194px;background:#8d8d92"></div><div class="a" style="left:494px;top:654px;width:2px;height:430px;background:#a9a9ae"></div>
</div>

<!-- STATUS BAR -->
<div id="status" class="a"><svg class="a" style="left:5px;top:13px" width="24" height="24" viewBox="0 0 24 24"><g fill="#2c2d33">
<path d="M1 1h2v2H1zM5 1h2v2H5zM9 1h2v2H9zM13 1h2v2h-2zM17 1h2v2h-2zM21 1h2v2h-2zM1 5h2v2H1zM21 5h2v2h-2zM1 17h2v2H1zM21 17h2v2h-2zM1 21h2v2H1zM5 21h2v2H5zM9 21h2v2H9zM13 21h2v2h-2zM17 21h2v2h-2zM21 21h2v2h-2zM9 5h2v2H9zM13 5h2v2h-2zM9 17h2v2H9zM13 17h2v2h-2z"/>
<rect x="0" y="11" width="24" height="2.2"/></g></svg><div class="t" style="left:32px;top:15px;font-size:20.3px;color:#2c2d33">3725.63 m</div><div class="a" style="left:297px;top:6px;width:1px;height:38px;background:#a3a3a8"></div><svg class="a" style="left:322px;top:13px" width="24" height="24" viewBox="0 0 24 24"><g fill="#2c2d33" transform="rotate(90 12 12)">
<path d="M1 1h2v2H1zM5 1h2v2H5zM9 1h2v2H9zM13 1h2v2h-2zM17 1h2v2h-2zM21 1h2v2h-2zM1 5h2v2H1zM21 5h2v2h-2zM1 17h2v2H1zM21 17h2v2h-2zM1 21h2v2H1zM5 21h2v2H5zM9 21h2v2H9zM13 21h2v2h-2zM17 21h2v2h-2zM21 21h2v2h-2zM9 5h2v2H9zM13 5h2v2h-2zM9 17h2v2H9zM13 17h2v2h-2z"/>
<rect x="0" y="11" width="24" height="2.2"/></g></svg><div class="t" style="left:350px;top:15px;font-size:20.3px;color:#2c2d33">73753.75 m</div><div class="a" style="left:616px;top:6px;width:1px;height:38px;background:#a3a3a8"></div><svg class="a" style="left:639px;top:17px" width="28" height="16" viewBox="0 0 28 16"><rect x="1.5" y="2" width="25" height="12" rx="1.5" fill="none" stroke="#2c2d33" stroke-width="2.6"/><path d="M6.5 2v5M11 2v4M15.5 2v5M20 2v4" stroke="#2c2d33" stroke-width="2"/></svg><div class="t" style="left:669px;top:15px;font-size:20.3px;color:#2c2d33">20.38 m</div><div class="a" style="left:935px;top:6px;width:1px;height:38px;background:#a3a3a8"></div><svg class="a" style="left:958px;top:15px" width="21" height="19" viewBox="0 0 21 19"><g fill="#2c2d33"><rect x="0.0" y="0.0" width="5.6" height="5.2"/><rect x="0.0" y="6.6" width="5.6" height="5.2"/><rect x="0.0" y="13.2" width="5.6" height="5.2"/><rect x="7.3" y="0.0" width="5.6" height="5.2"/><rect x="7.3" y="6.6" width="5.6" height="5.2"/><rect x="7.3" y="13.2" width="5.6" height="5.2"/><rect x="14.6" y="0.0" width="5.6" height="5.2"/><rect x="14.6" y="6.6" width="5.6" height="5.2"/><rect x="14.6" y="13.2" width="5.6" height="5.2"/></g></svg><div class="t" style="left:986px;top:15px;font-size:20.3px;color:#2c2d33">size</div><div class="a" style="left:1021px;top:6px;width:1px;height:38px;background:#a3a3a8"></div><div class="t" style="left:1038px;top:17px;font-size:16px;color:#3a3b41">50</div><div class="a" style="left:1194px;top:6px;width:40px;height:37px;background:#a6a6ab"></div><div class="t" style="left:1207px;top:17px;font-size:15px;color:#55565c">m</div><svg class="a" style="left:1277px;top:15px" width="21" height="19" viewBox="0 0 21 19"><g fill="#2c2d33"><rect x="0.0" y="0.0" width="5.6" height="5.2"/><rect x="0.0" y="6.6" width="5.6" height="5.2"/><rect x="0.0" y="13.2" width="5.6" height="5.2"/><rect x="7.3" y="0.0" width="5.6" height="5.2"/><rect x="7.3" y="6.6" width="5.6" height="5.2"/><rect x="7.3" y="13.2" width="5.6" height="5.2"/><rect x="14.6" y="0.0" width="5.6" height="5.2"/><rect x="14.6" y="6.6" width="5.6" height="5.2"/><rect x="14.6" y="13.2" width="5.6" height="5.2"/></g></svg><div class="t" style="left:1304px;top:15px;font-size:20.3px;color:#2c2d33">divisions</div><div class="a" style="left:1382px;top:6px;width:1px;height:38px;background:#a3a3a8"></div><div class="t" style="left:1401px;top:17px;font-size:16px;color:#3a3b41">5</div><div class="a" style="left:1551px;top:6px;width:1px;height:38px;background:#a3a3a8"></div></div>

<svg class="a" style="left:0;top:0;pointer-events:none" width="2524" height="1228" viewBox="0 0 2524 1228"><g fill="none" stroke="#03120c" stroke-opacity="0.14" stroke-width="7"><rect x="12.75" y="13.75" width="830.5" height="54.5" rx="9.25" ry="9.25"/><rect x="10.75" y="72.75" width="157.5" height="192.5" rx="24.25" ry="24.25"/><rect x="173.75" y="71.75" width="1812.5" height="194.5" rx="27.25" ry="27.25"/><rect x="1988.75" y="72.75" width="522.0" height="574.5" rx="79.25" ry="79.25"/><rect x="1989.75" y="647.75" width="520.0" height="508.5" rx="79.25" ry="79.25"/><rect x="1660.75" y="266.75" width="326.5" height="290.5" rx="42.25" ry="42.25"/><rect x="1805.75" y="964.75" width="180.5" height="189.5" rx="25.25" ry="25.25"/><rect x="12.75" y="1161.75" width="2496.5" height="47.5" rx="9.25" ry="9.25"/></g><g fill="none" stroke="#80fcd4" stroke-width="5.5"><rect x="12.75" y="13.75" width="830.5" height="54.5" rx="9.25" ry="9.25"/><rect x="10.75" y="72.75" width="157.5" height="192.5" rx="24.25" ry="24.25"/><rect x="173.75" y="71.75" width="1812.5" height="194.5" rx="27.25" ry="27.25"/><rect x="1988.75" y="72.75" width="522.0" height="574.5" rx="79.25" ry="79.25"/><rect x="1989.75" y="647.75" width="520.0" height="508.5" rx="79.25" ry="79.25"/><rect x="1660.75" y="266.75" width="326.5" height="290.5" rx="42.25" ry="42.25"/><rect x="1805.75" y="964.75" width="180.5" height="189.5" rx="25.25" ry="25.25"/><rect x="12.75" y="1161.75" width="2496.5" height="47.5" rx="9.25" ry="9.25"/></g><path d="M425,18.8 H432.9 V58.2 H425 V30.7 H416.2 V26.6 C420.5,26.2 423.5,23.5 425,18.8 Z" fill="#a6fde0" stroke="#1e3a32" stroke-opacity="0.3" stroke-width="1.5" paint-order="stroke"/><text x="91.5" y="187.0" text-anchor="middle" font-family="Liberation Sans" font-weight="700" font-size="58" fill="#a6fde0" stroke="#1e3a32" stroke-opacity="0.25" stroke-width="2" paint-order="stroke">2</text><text x="1040.5" y="188.25" text-anchor="middle" font-family="Liberation Sans" font-weight="700" font-size="58" fill="#a6fde0" stroke="#1e3a32" stroke-opacity="0.25" stroke-width="2" paint-order="stroke">3</text><text x="2249.8" y="378.1" text-anchor="middle" font-family="Liberation Sans" font-weight="700" font-size="58" fill="#a6fde0" stroke="#1e3a32" stroke-opacity="0.25" stroke-width="2" paint-order="stroke">4</text><text x="2250.3" y="906.5" text-anchor="middle" font-family="Liberation Sans" font-weight="700" font-size="58" fill="#a6fde0" stroke="#1e3a32" stroke-opacity="0.25" stroke-width="2" paint-order="stroke">5</text><text x="1828.5" y="430.7" text-anchor="middle" font-family="Liberation Sans" font-weight="700" font-size="58" fill="#a6fde0" stroke="#1e3a32" stroke-opacity="0.25" stroke-width="2" paint-order="stroke">6</text><text x="1903" y="1079.9" text-anchor="middle" font-family="Liberation Sans" font-weight="700" font-size="58" fill="#a6fde0" stroke="#1e3a32" stroke-opacity="0.25" stroke-width="2" paint-order="stroke">7</text><text x="1262.4" y="1204.4" text-anchor="middle" font-family="Liberation Sans" font-weight="700" font-size="58" fill="#a6fde0" stroke="#1e3a32" stroke-opacity="0.25" stroke-width="2" paint-order="stroke">8</text></svg>
</body></html>
